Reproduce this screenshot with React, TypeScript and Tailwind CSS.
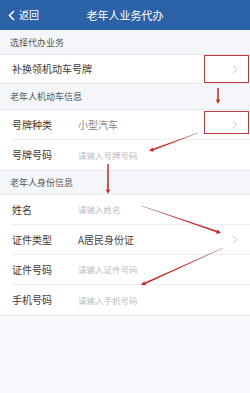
import React from 'react';

const font = { fontFamily: '"Noto Sans CJK SC", "Noto Sans", sans-serif' };

type Arrow = { x1: number; y1: number; x2: number; y2: number; taper?: boolean };

const arrows: Arrow[] = [
  { x1: 218, y1: 88, x2: 218, y2: 104 },
  { x1: 198, y1: 133, x2: 149, y2: 151, taper: true },
  { x1: 108, y1: 164, x2: 108, y2: 194 },
  { x1: 142, y1: 206, x2: 221, y2: 233, taper: true },
  { x1: 223, y1: 248, x2: 141, y2: 285, taper: true },
];

// builds a shaft + head polygon for one annotation arrow
const arrowShape = (a: Arrow) => {
  const dx = a.x2 - a.x1;
  const dy = a.y2 - a.y1;
  const len = Math.hypot(dx, dy);
  const ux = dx / len;
  const uy = dy / len;
  const nx = -uy;
  const ny = ux;
  const h = 4.5;
  const hw = 2.2;
  const w = 0.8;
  const w0 = a.taper ? 0.15 : 0.7;
  const bx = a.x2 - ux * h;
  const by = a.y2 - uy * h;
  const p = (x: number, y: number) => `${x.toFixed(2)},${y.toFixed(2)}`;
  const shaft = [
    p(a.x1 + nx * w0, a.y1 + ny * w0),
    p(bx + nx * w, by + ny * w),
    p(bx - nx * w, by - ny * w),
    p(a.x1 - nx * w0, a.y1 - ny * w0),
  ].join(' ');
  const head = [p(a.x2, a.y2), p(bx + nx * hw, by + ny * hw), p(bx - nx * hw, by - ny * hw)].join(' ');
  return { shaft, head };
};

const Chevron = () => (
  <svg width="6" height="9" viewBox="0 0 6 9" className="shrink-0">
    <polyline points="1,1 5,4.5 1,8" fill="none" stroke="#c4c7cc" strokeWidth="1" />
  </svg>
);

const Row = ({
  label,
  value,
  valueClass = 'text-[#555]',
  placeholder,
  arrow,
  last,
}: {
  label: string;
  value?: string;
  valueClass?: string;
  placeholder?: string;
  arrow?: boolean;
  last?: boolean;
}) => (
  <div className="bg-white pl-[12px] h-[30px]">
    <div className={`flex items-center h-full pr-[12px] leading-none ${last ? '' : 'border-b border-[#eceef1]'}`}>
      <span className="w-[66px] shrink-0 text-[10px] text-[#3a3a3a]">{label}</span>
      <span className="flex-1 flex items-center">
        {value && <span className={`text-[10px] ${valueClass}`}>{value}</span>}
        {placeholder && <span className="text-[8.5px] text-[#bdbdbd]">{placeholder}</span>}
      </span>
      {arrow && <Chevron />}
    </div>
  </div>
);

export default function App() {
  return (
    <div className="relative w-[250px] h-[393px] overflow-hidden bg-[#f6f8fb]" style={font}>
      <div className="h-[30px] bg-[#2c62a8] grid grid-cols-[1fr_auto_1fr] items-center text-white leading-none">
        <div className="flex items-center pl-[8px] gap-[4px]">
          <svg width="7" height="11" viewBox="0 0 7 11">
            <polyline points="6,1 1.5,5.5 6,10" fill="none" stroke="white" strokeWidth="1.6" />
          </svg>
          <span className="text-[10px]">返回</span>
        </div>
        <div className="text-[11px]">老年人业务代办</div>
        <div />
      </div>

      <div className="flex items-center h-[25px] px-[10px] text-[9px] leading-none text-[#555] bg-[#f4f6fa] border-b border-[#e6e8ec]">
        选择代办业务
      </div>
      <div className="h-[29px] bg-white flex items-center px-[12px] leading-none border-b border-[#e6e8ec]">
        <span className="flex-1 text-[10px] text-[#3a3a3a]">补换领机动车号牌</span>
        <Chevron />
      </div>

      <div className="flex items-center h-[25px] px-[10px] text-[9px] leading-none text-[#555] bg-[#f4f6fa]">
        老年人机动车信息
      </div>
      <div className="border-t border-[#e6e8ec]">
        <Row label="号牌种类" value="小型汽车" valueClass="text-[#888]" arrow />
        <Row label="号牌号码" placeholder="请输入号牌号码" last />
      </div>

      <div className="flex items-center h-[24px] px-[10px] text-[9px] leading-none text-[#555] bg-[#f4f6fa] border-t border-[#e6e8ec]">
        老年人身份信息
      </div>
      <div className="border-y border-[#e6e8ec]">
        <Row label="姓名" placeholder="请输入姓名" />
        <Row label="证件类型" value="A居民身份证" valueClass="text-[#444]" arrow />
        <Row label="证件号码" placeholder="请输入证件号码" />
        <Row label="手机号码" placeholder="请输入手机号码" last />
      </div>

      {/* annotation boxes */}
      <div className="absolute left-[204px] top-[55px] w-[45px] h-[28px] border border-[#c0393b]" />
      <div className="absolute left-[204px] top-[111px] w-[45px] h-[23px] border border-[#c0393b]" />

      <svg className="absolute inset-0 pointer-events-none" width="250" height="393">
        {arrows.map((a, i) => {
          const s = arrowShape(a);
          return (
            <g key={i}>
              <defs>
                <linearGradient id={`g${i}`} gradientUnits="userSpaceOnUse" x1={a.x1} y1={a.y1} x2={a.x2} y2={a.y2}>
                  <stop offset="0" stopColor={a.taper ? '#9a8a8a' : '#c8201e'} />
                  <stop offset="0.5" stopColor="#c22a26" />
                  <stop offset="1" stopColor="#c8201e" />
                </linearGradient>
              </defs>
              <polygon points={s.shaft} fill={`url(#g${i})`} />
              <polygon points={s.head} fill="#c8201e" />
            </g>
          );
        })}
      </svg>
    </div>
  );
}
